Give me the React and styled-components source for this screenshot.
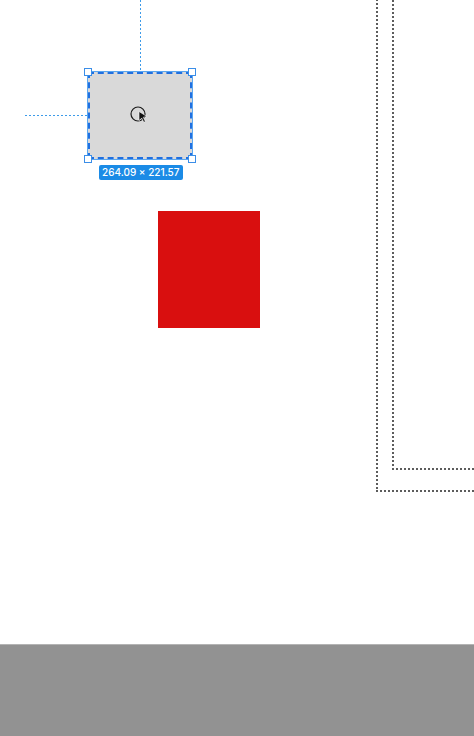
import React from "react";
import styled, { createGlobalStyle } from "styled-components";

const Global = createGlobalStyle`
  html, body {
    margin: 0;
    padding: 0;
    background: #ffffff;
    font-family: "Inter", "Liberation Sans", sans-serif;
  }
`;

const Page = styled.div`
  display: flex;
  flex-direction: column;
  width: 474px;
  height: 736px;
  overflow: hidden;
`;

// free canvas of the design tool; items sit at their canvas coordinates
const Canvas = styled.div`
  position: relative;
  height: 644px;
  flex: none;
  background: #ffffff;
`;

const Footer = styled.div`
  flex: 1;
  background: #929292;
  border-top: 1px solid #b4b4b4;
`;

const Guide = styled.div`
  position: absolute;
  left: ${({ x }) => x}px;
  top: ${({ y }) => y}px;
  width: ${({ w }) => w}px;
  height: ${({ h }) => h}px;
  background: ${({ vertical }) =>
    vertical
      ? "repeating-linear-gradient(to bottom, #3d9be9 0 2px, transparent 2px 4px)"
      : "repeating-linear-gradient(to right, #3d9be9 0 2px, transparent 2px 4px)"};
`;

const Frame = styled.div`
  position: absolute;
  left: ${({ x }) => x}px;
  top: ${({ y }) => y}px;
  right: -20px;
  bottom: ${({ b }) => b}px;
  border: 2px dotted #5c5c5c;
`;

const Selected = styled.div`
  position: absolute;
  left: 88px;
  top: 72px;
  width: 104px;
  height: 87px;
  box-sizing: border-box;
  background: #d9d9d9;
  border: 2px dashed #1f6fe0;
  box-shadow: 0 0 0 1px #5aa6f0;
  display: flex;
  align-items: center;
  justify-content: center;
`;

const Handle = styled.div`
  position: absolute;
  width: 6px;
  height: 6px;
  background: #ffffff;
  border: 1px solid #3b8ee8;
  ${({ v }) => (v === "top" ? "top: -6px;" : "bottom: -6px;")}
  ${({ h }) => (h === "left" ? "left: -6px;" : "right: -6px;")}
`;

const SizeTag = styled.div`
  position: absolute;
  left: 99px;
  top: 165px;
  height: 15px;
  padding: 0 3px;
  border-radius: 2px;
  background: #1b8be6;
  color: #ffffff;
  font-size: 10px;
  font-weight: 500;
  line-height: 15px;
  white-space: nowrap;
`;

const Block = styled.div`
  position: absolute;
  left: 158px;
  top: 211px;
  width: 102px;
  height: 117px;
  background: #d90f0f;
`;

const MoveCursor = () => (
  <svg width="22" height="20" viewBox="0 0 22 20" style={{ marginLeft: 0, marginTop: -1 }}>
    <circle cx="9" cy="9" r="7" fill="none" stroke="#1a1a1a" strokeWidth="1.2" />
    <path
      d="M10 6.5 L18 11.5 L14.2 12.3 L16.4 16.5 L14.8 17.3 L12.8 13.2 L10 15.6 Z"
      fill="#111"
      stroke="#fff"
      strokeWidth="0.6"
    />
  </svg>
);

export default function App() {
  return (
    <Page>
      <Global />
      <Canvas>
        <Guide vertical x={140} y={0} w={1} h={72} />
        <Guide x={25} y={115} w={63} h={1} />
        <Frame x={376} y={-20} b={152} />
        <Frame x={392} y={-20} b={174} />
        <Selected>
          <Handle v="top" h="left" />
          <Handle v="top" h="right" />
          <Handle v="bottom" h="left" />
          <Handle v="bottom" h="right" />
          <MoveCursor />
        </Selected>
        <SizeTag>264.09 × 221.57</SizeTag>
        <Block />
      </Canvas>
      <Footer />
    </Page>
  );
}
